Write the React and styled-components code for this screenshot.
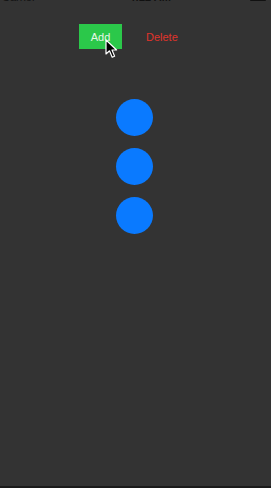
import styled, { createGlobalStyle } from "styled-components";

const Global = createGlobalStyle`
  html, body {
    margin: 0;
    padding: 0;
    background: #333333;
    font-family: "Liberation Sans", Arial, sans-serif;
  }
`

export default function App(){
    return(
        <>
            <Global />
            <Screen>
                <StatusBar>
                    <StatusLeft>Carrier <Wifi>⌔</Wifi></StatusLeft>
                    <StatusText>4:22 AM</StatusText>
                    <Battery />
                </StatusBar>
                <Toolbar>
                    <AddButton>
                        Add
                        <Cursor />
                    </AddButton>
                    <DeleteButton>Delete</DeleteButton>
                </Toolbar>
                <List>
                    <Dot />
                    <Dot />
                    <Dot />
                </List>
            </Screen>
            <BottomEdge />
        </>
    )
}

function Cursor(){
    return(
        <CursorIcon width="14" height="20" viewBox="0 0 14 20">
            <path d="M1 1 L1 15 L4.5 11.8 L7.2 18.2 L9.6 17.2 L7 11 L11.6 11 Z"
                fill="#000" stroke="#fff" strokeWidth="1.2" strokeLinejoin="round" />
        </CursorIcon>
    )
}

const Screen = styled.div`
  display: flex;
  flex-direction: column;
  height: 486px;
  overflow: hidden;
  background: #333333;
`
const StatusBar = styled.div`
  display: flex;
  align-items: center;
  justify-content: space-between;
  height: 20px;
  margin-top: -13px;
  padding: 0 3px 0 2px;
  color: #111;
  font-size: 11px;
`
const StatusLeft = styled.span`
  display: flex;
  gap: 8px;
  width: 60px;
`
const Wifi = styled.span`
  font-size: 9px;
`
const StatusText = styled.span`
  font-weight: 700;
  margin-left: -12px;
`
const Battery = styled.span`
  width: 16px;
  height: 7px;
  margin-right: 2px;
  background: #111;
  border-radius: 1px;
`
const Toolbar = styled.div`
  display: flex;
  align-items: center;
  gap: 24px;
  margin-top: 17px;
  padding-left: 79px;
`
const AddButton = styled.div`
  position: relative;
  width: 43px;
  height: 25px;
  display: flex;
  align-items: center;
  justify-content: center;
  background: #2bc84a;
  color: #e6f7e6;
  font-size: 11px;
`
const CursorIcon = styled.svg`
  position: absolute;
  left: 26px;
  top: 15px;
`
const DeleteButton = styled.div`
  color: #e0332b;
  font-size: 11px;
`
const List = styled.div`
  display: flex;
  flex-direction: column;
  align-items: center;
  gap: 12px;
  margin-top: 50px;
  padding-right: 3px;
`
const Dot = styled.div`
  width: 37px;
  height: 37px;
  border-radius: 50%;
  background: #0a7aff;
`
const BottomEdge = styled.div`
  height: 2px;
  background: #1b1b1b;
`
